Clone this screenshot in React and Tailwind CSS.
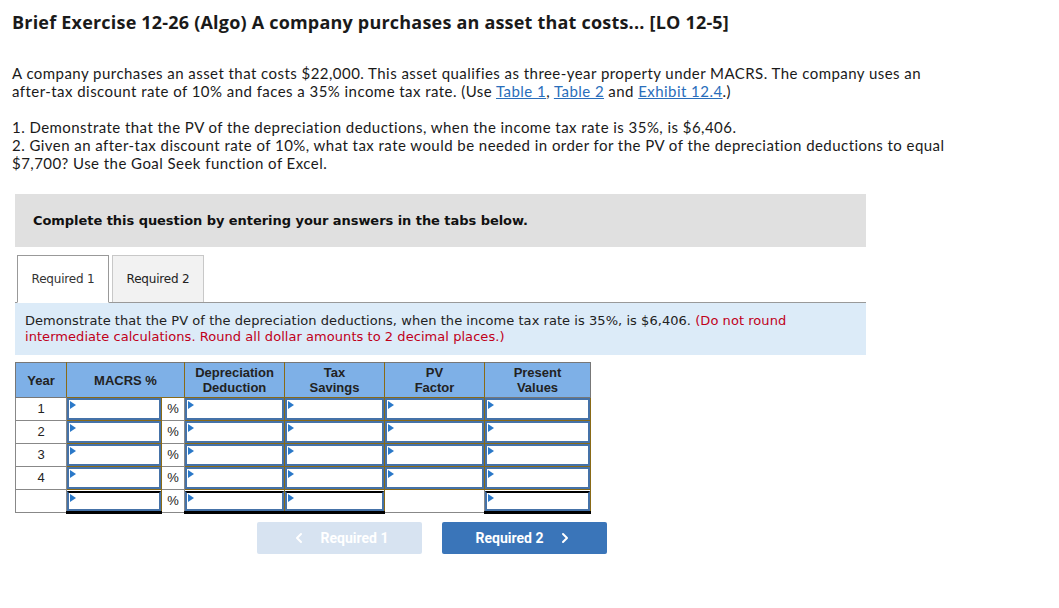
import { ChevronLeft, ChevronRight } from "lucide-react";

const cols = ["dep", "tax", "pv", "pres"];

function Flag() {
  return (
    <span className="absolute left-[1px] top-[1px] w-0 h-0 border-t-[4px] border-b-[4px] border-l-[6px] border-t-transparent border-b-transparent border-l-[#2a78c8]" />
  );
}

function InputCell({ total, blank }) {
  if (blank) {
    return <td className="p-0 h-[23px] border border-[#888] bg-white" />;
  }
  return (
    <td
      className={
        "p-0 h-[23px] border border-[#8a6a16] bg-white " +
        (total ? "border-b-[3px] border-b-black border-b-double" : "")
      }
    >
      <div
        className={
          "relative border-2 border-[#4572a8] " +
          (total ? "h-[20px] border-t-black" : "h-[22px]")
        }
      >
        <Flag />
      </div>
    </td>
  );
}

function App() {
  const rows = ["1", "2", "3", "4", ""];

  return (
    <div className="w-[1059px] h-[608px] bg-white text-[#1a1a1a] pt-[11px] font-['Lato','Open_Sans',sans-serif]">
      <h1 className="pl-[12px] font-['Open_Sans',sans-serif] text-[18px] font-bold leading-[22px] tracking-[0.2px]">
        Brief Exercise 12-26 (Algo) A company purchases an asset that costs... [LO 12-5]
      </h1>

      <div className="pl-[12px] w-[945px] mt-[31px] text-[15px] leading-[18px] tracking-[0.45px]">
        <p>
          A company purchases an asset that costs $22,000. This asset qualifies as three-year property under MACRS. The company uses an
          after-tax discount rate of 10% and faces a 35% income tax rate. (Use{" "}
          <span className="text-[#2a6ebb] underline">Table 1</span>,{" "}
          <span className="text-[#2a6ebb] underline">Table 2</span> and{" "}
          <span className="text-[#2a6ebb] underline">Exhibit 12.4</span>.)
        </p>
        <p className="mt-[18px]">
          1. Demonstrate that the PV of the depreciation deductions, when the income tax rate is 35%, is $6,406.
          <br />
          2. Given an after-tax discount rate of 10%, what tax rate would be needed in order for the PV of the depreciation deductions to equal
          $7,700? Use the Goal Seek function of Excel.
        </p>
      </div>

      <div className="ml-[15px] w-[851px] mt-[22px] font-['DejaVu_Sans',sans-serif]">
        <div className="h-[53px] bg-[#e0e0e0] flex items-center pl-[18px] text-[13px] font-bold tracking-[-0.05px] text-[#111]">
          Complete this question by entering your answers in the tabs below.
        </div>

        <div className="mt-[8px] flex items-end border-b border-[#999] pl-[2px] gap-[3px] h-[48px]">
          <div className="w-[92px] h-[48px] -mb-px bg-white border border-[#999] border-b-white flex items-center justify-center text-[12px] tracking-[-0.2px] text-[#333]">
            Required 1
          </div>
          <div className="w-[92px] h-[47px] bg-[#f2f2f2] border border-[#c8c8c8] border-b-0 flex items-center justify-center text-[12px] tracking-[-0.2px] text-[#222]">
            Required 2
          </div>
        </div>

        <div className="bg-[#dcebf8] px-[10px] pt-[10px] pb-[10px] text-[13px] leading-[16px] tracking-[0.05px] text-[#222]">
          Demonstrate that the PV of the depreciation deductions, when the income tax rate is 35%, is $6,406.{" "}
          <span className="text-[#c0001a]">
            (Do not round intermediate calculations. Round all dollar amounts to 2 decimal places.)
          </span>
        </div>
      </div>

      <table className="ml-[15px] mt-[7px] border-collapse table-fixed font-['Liberation_Sans',Arial,sans-serif] text-[13px] text-[#222]">
        <colgroup>
          <col className="w-[51px]" />
          <col className="w-[95px]" />
          <col className="w-[23px]" />
          <col className="w-[100px]" />
          <col className="w-[100px]" />
          <col className="w-[100px]" />
          <col className="w-[106px]" />
        </colgroup>
        <thead>
          <tr className="bg-[#7eb0e7] h-[35px] font-bold leading-[15px]">
            <th className="border border-[#777] border-r-[#8a6a16]">Year</th>
            <th colSpan={2} className="border border-[#8a6a16] border-t-[#777]">MACRS %</th>
            <th className="border border-[#8a6a16] border-t-[#777]">Depreciation<br />Deduction</th>
            <th className="border border-[#8a6a16] border-t-[#777]">Tax<br />Savings</th>
            <th className="border border-[#8a6a16] border-t-[#777]">PV<br />Factor</th>
            <th className="border border-[#777] border-l-[#8a6a16]">Present<br />Values</th>
          </tr>
        </thead>
        <tbody>
          {rows.map((y, i) => {
            const total = i === 4;
            return (
              <tr key={i} className="h-[23px]">
                <td className="border border-[#888] text-center bg-white">{y}</td>
                <InputCell total={total} />
                <td className="border border-[#888] bg-white text-center text-[13px]">%</td>
                {cols.map((c) => (
                  <InputCell key={c} total={total} blank={total && c === "pv"} />
                ))}
              </tr>
            );
          })}
        </tbody>
      </table>

      <div className="flex gap-[20px] pl-[257px] mt-[8px] font-['Roboto',sans-serif] text-[14px] font-bold">
        <button className="w-[165px] h-[32px] rounded-[2px] bg-[#d7e3f1] text-white flex items-center justify-center gap-[14px]">
          <ChevronLeft size={16} strokeWidth={3} />
          Required 1
        </button>
        <button className="w-[165px] h-[32px] rounded-[2px] bg-[#3a75b9] text-white flex items-center justify-center gap-[14px]">
          Required 2
          <ChevronRight size={16} strokeWidth={3} />
        </button>
      </div>
    </div>
  );
}

export default App;
